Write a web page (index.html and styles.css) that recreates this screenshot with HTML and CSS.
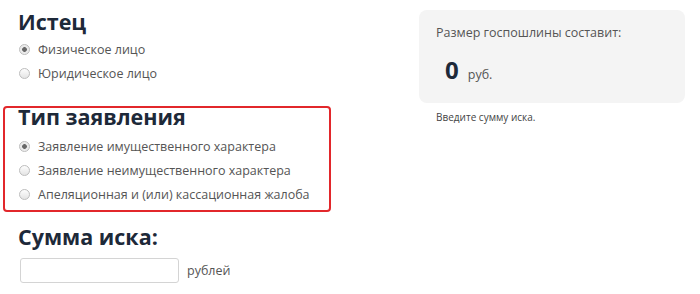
FILE: index.html
```html
<!DOCTYPE html>
<html lang="ru">
<head>
<meta charset="utf-8">
<link rel="stylesheet" href="styles.css">
</head>
<body>
<div class="page">
  <div class="form">
    <section class="group group-person">
      <h2 class="title">Истец</h2>
      <label class="opt"><input type="radio" name="p" checked><span>Физическое лицо</span></label>
      <label class="opt"><input type="radio" name="p"><span>Юридическое лицо</span></label>
    </section>
    <section class="group group-marked">
      <h2 class="title">Тип заявления</h2>
      <label class="opt"><input type="radio" name="t" checked><span>Заявление имущественного характера</span></label>
      <label class="opt"><input type="radio" name="t"><span>Заявление неимущественного характера</span></label>
      <label class="opt"><input type="radio" name="t"><span>Апеляционная и (или) кассационная жалоба</span></label>
    </section>
    <section class="group group-sum">
      <h2 class="title">Сумма иска:</h2>
      <div class="sum-row">
        <input class="sum-input" type="text">
        <span class="unit">рублей</span>
      </div>
    </section>
  </div>
  <aside class="side">
    <div class="result">
      <div class="result-label">Размер госпошлины составит:</div>
      <div class="result-value"><span class="num">0</span><span class="cur">руб.</span></div>
    </div>
    <div class="hint">Введите сумму иска.</div>
  </aside>
</div>
</body>
</html>
```
FILE: styles.css
```css
html, body {
  margin: 0;
  padding: 0;
  background: #ffffff;
}
body {
  font-family: "Open Sans", "Liberation Sans", sans-serif;
  color: #555;
}
.page {
  display: flex;
  align-items: flex-start;
  width: 700px;
  height: 294px;
  overflow: hidden;
}
.form {
  width: 335px;
  padding-top: 8px;
}
.group {
  padding-left: 18px;
}
.group-marked {
  position: relative;
  margin-top: 17.5px;
}
.group-marked::before {
  content: "";
  position: absolute;
  top: 3px;
  bottom: -6px;
  left: 3px;
  width: 328px;
  box-sizing: border-box;
  border: 2px solid #e2272b;
  border-radius: 4px;
  pointer-events: none;
}
.group-sum {
  margin-top: 17px;
}
.title {
  margin: 0 0 2px;
  font-size: 21.5px;
  line-height: 28px;
  font-weight: 700;
  color: #1d2939;
}
.group-marked .title {
  margin-bottom: 3.75px;
}
.opt {
  display: flex;
  align-items: center;
  height: 23.75px;
  font-size: 12.5px;
  color: #555;
}
.opt input {
  -webkit-appearance: none;
  appearance: none;
  width: 11px;
  height: 11px;
  margin: 0 8px 0 1px;
  border: 1px solid #bdbdbd;
  border-radius: 50%;
  background: linear-gradient(#fdfdfd, #e4e4e4);
  box-sizing: border-box;
}
.opt input:checked {
  background: radial-gradient(circle, #686868 0, #686868 2px, #e8e8e8 2.7px, #f3f3f3 100%);
}
.sum-row {
  display: flex;
  align-items: center;
  margin-top: 7.25px;
  padding-left: 2px;
}
.sum-input {
  width: 159px;
  height: 25px;
  box-sizing: border-box;
  border: 1px solid #d4d4d4;
  border-radius: 3px;
  margin: 0;
  padding: 0 6px;
  font: inherit;
  background: #fff;
}
.unit {
  font-size: 12.5px;
  margin-left: 8px;
  color: #555;
}
.side {
  margin-left: 84px;
  padding-top: 10px;
}
.result {
  width: 266px;
  height: 93px;
  box-sizing: border-box;
  background: #f4f4f4;
  border-radius: 8px;
  padding: 14px 17px;
}
.result-label {
  font-size: 12.5px;
  line-height: 18px;
  color: #555;
}
.result-value {
  display: flex;
  align-items: baseline;
  margin-top: 14px;
  padding-left: 9px;
}
.num {
  font-size: 24px;
  font-weight: 700;
  color: #1d2939;
  line-height: 28px;
}
.cur {
  font-size: 12.5px;
  margin-left: 9px;
  color: #555;
}
.hint {
  font-size: 10px;
  color: #444;
  margin-top: 7px;
  padding-left: 17px;
}
```
